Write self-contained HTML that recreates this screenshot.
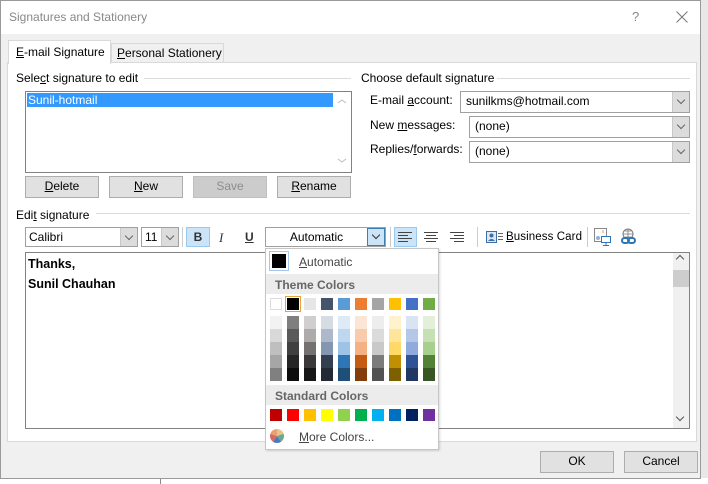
<!DOCTYPE html>
<html><head><meta charset="utf-8"><style>
*{box-sizing:border-box;margin:0;padding:0}
body{width:708px;height:484px;overflow:hidden;background:#f0f0f0;font-family:"Liberation Sans",sans-serif;font-size:12px;color:#000;position:relative}
.a{position:absolute}
.btn{position:absolute;background:#e1e1e1;border:1px solid #adadad;text-align:center;line-height:19px;font-size:12px}
.combo{position:absolute;background:#fff;border:1px solid #a0a0a0;line-height:19px;padding-left:5px}
.dd{position:absolute;right:0;top:0;bottom:0;width:17px;background:#dcdcdc;border-left:1px solid #c8c8c8}
.dd:after{content:"";position:absolute;left:5px;top:5px;width:5px;height:5px;border-right:1px solid #666;border-bottom:1px solid #666;transform:rotate(45deg)}
.line{position:absolute;height:1px;background:#dcdcdc}
.sw{position:absolute;width:12px;height:12px}
</style></head><body>
<div class="a" style="left:0;top:478px;width:708px;height:6px;background:#fff"></div>
<div class="a" style="left:160px;top:478px;width:1px;height:6px;background:#888"></div>
<div class="a" style="left:700px;top:0;width:8px;height:478px;background:#e8e8e8;border-left:1px solid #bbb"></div>
<div class="a" style="left:0;top:0;width:701px;height:479px;background:#f0f0f0;border:1px solid #9a9a9a"></div>
<div class="a" style="left:1px;top:1px;width:699px;height:33px;background:#fff"></div>
<div class="a" style="left:9px;top:10px;color:#888;font-size:12px">Signatures and Stationery</div>
<div class="a" style="left:632px;top:9px;color:#888;font-size:13px">?</div>
<svg class="a" style="left:676px;top:11px" width="12" height="12"><path d="M0.5 0.5L11.5 11.5M11.5 0.5L0.5 11.5" stroke="#777" stroke-width="1"/></svg>
<div class="a" style="left:111px;top:43px;width:113px;height:20px;background:#f0f0f0;border:1px solid #d9d9d9;border-bottom:none"></div>
<div class="a" style="left:117px;top:46px"><u>P</u>ersonal Stationery</div>
<div class="a" style="left:7px;top:62px;width:690px;height:380px;background:#fff;border:1px solid #d9d9d9"></div>
<div class="a" style="left:8px;top:40px;width:103px;height:24px;background:#fff;border:1px solid #d9d9d9;border-bottom:none"></div>
<div class="a" style="left:16px;top:45px"><u>E</u>-mail Signature</div>
<div class="a" style="left:16px;top:71px">Sele<u>c</u>t signature to edit</div>
<div class="line" style="left:144px;top:78px;width:207px"></div>
<div class="a" style="left:25px;top:91px;width:327px;height:82px;border:1px solid #828282;background:#fff"></div>
<div class="a" style="left:27px;top:93px;width:306px;height:14px;background:#3399ff;color:#fff;line-height:14px;padding-left:1px">Sunil-hotmail</div>
<svg class="a" style="left:337px;top:99px" width="10" height="70"><path d="M1 4L5 1L9 4M1 60L5 63L9 60" fill="none" stroke="#bbb"/></svg>
<div class="btn" style="left:25px;top:176px;width:74px;height:22px"><u>D</u>elete</div>
<div class="btn" style="left:109px;top:176px;width:74px;height:22px"><u>N</u>ew</div>
<div class="btn" style="left:193px;top:176px;width:74px;height:22px;background:#cccccc;border-color:#bfbfbf;color:#8d8d8d">Save</div>
<div class="btn" style="left:277px;top:176px;width:74px;height:22px"><u>R</u>ename</div>
<div class="a" style="left:361px;top:71px">Choose default signature</div>
<div class="line" style="left:497px;top:78px;width:193px"></div>
<div class="a" style="left:370px;top:93px">E-mail <u>a</u>ccount:</div>
<div class="combo" style="left:460px;top:91px;width:230px;height:22px">sunilkms@hotmail.com<div class="dd"></div></div>
<div class="a" style="left:370px;top:118px">New <u>m</u>essages:</div>
<div class="combo" style="left:469px;top:116px;width:221px;height:22px">(none)<div class="dd"></div></div>
<div class="a" style="left:370px;top:142px">Replies/<u>f</u>orwards:</div>
<div class="combo" style="left:469px;top:141px;width:221px;height:22px">(none)<div class="dd"></div></div>
<div class="a" style="left:16px;top:208px">Edi<u>t</u> signature</div>
<div class="line" style="left:96px;top:213px;width:594px"></div>
<div class="combo" style="left:25px;top:227px;width:113px;height:20px;line-height:18px;padding-left:3px">Calibri<div class="dd"></div></div>
<div class="combo" style="left:141px;top:227px;width:38px;height:20px;line-height:18px;padding-left:3px">11<div class="dd"></div></div>
<div class="a" style="left:182px;top:227px;width:1px;height:20px;background:#ccc"></div>
<div class="a" style="left:186px;top:227px;width:24px;height:20px;background:#cce4f7;border:1px solid #99c9ef;text-align:center;line-height:18px;font-weight:bold;color:#333">B</div>
<div class="a" style="left:219px;top:230px;font-style:italic;font-family:'Liberation Serif',serif;font-size:13px;color:#333">I</div>
<div class="a" style="left:245px;top:230px;text-decoration:underline;color:#333;font-weight:bold">U</div>
<div class="a" style="left:265px;top:227px;width:121px;height:20px;background:#fff;border:1px solid #a0a0a0;text-align:center;line-height:18px;padding-right:18px">Automatic<div class="a" style="right:0;top:0;width:18px;height:18px;background:#cce4f7;border:1px solid #3c7fb1"></div><div class="a" style="right:6px;top:4px;width:6px;height:6px;border-right:1px solid #333;border-bottom:1px solid #333;transform:rotate(45deg)"></div></div>
<div class="a" style="left:390px;top:227px;width:1px;height:20px;background:#ccc"></div>
<div class="a" style="left:394px;top:227px;width:23px;height:20px;background:#cce4f7;border:1px solid #99c9ef"></div>
<svg class="a" style="left:397px;top:231px" width="72" height="12"><g stroke="#444" stroke-width="1"><path d="M1 1.5h14M1 4.5h10M1 7.5h14M1 10.5h10"/><path d="M27 1.5h14M29 4.5h10M27 7.5h14M29 10.5h10"/><path d="M53 1.5h14M57 4.5h10M53 7.5h14M57 10.5h10"/></g></svg>
<div class="a" style="left:477px;top:227px;width:1px;height:20px;background:#ccc"></div>
<svg class="a" style="left:486px;top:231px" width="18" height="13"><rect x="0.5" y="0.5" width="10" height="11" fill="#dbe8f5" stroke="#3c6ea8"/><circle cx="5.5" cy="4.5" r="2" fill="#3c6ea8"/><path d="M2 10 q3.5-4 7 0" fill="#3c6ea8"/><path d="M12 2.5h5M12 5.5h5M12 8.5h5" stroke="#666"/></svg>
<div class="a" style="left:506px;top:231px;font-size:11.5px;letter-spacing:0.1px"><u>B</u>usiness Card</div>
<div class="a" style="left:587px;top:227px;width:1px;height:20px;background:#ccc"></div>
<svg class="a" style="left:594px;top:228px" width="18" height="18"><rect x="0.5" y="0.5" width="12" height="13" fill="#fff" stroke="#888"/><circle cx="4" cy="10" r="2" fill="#8fb1d9"/><rect x="7.5" y="8.5" width="9" height="6" fill="#fff" stroke="#2e75b5"/><path d="M12 15v2M9 17.5h6" stroke="#2e75b5"/><path d="M9 2v3" stroke="#e8a060"/></svg>
<svg class="a" style="left:621px;top:228px" width="16" height="18"><circle cx="7" cy="6" r="5" fill="none" stroke="#777"/><path d="M2 6h10M7 1v10M4 3h6M4 9h6" stroke="#777" stroke-width=".8"/><rect x="1" y="10" width="7" height="5" rx="2.5" fill="none" stroke="#2e75b5" stroke-width="2"/><rect x="7" y="10" width="7" height="5" rx="2.5" fill="none" stroke="#2e75b5" stroke-width="2"/></svg>
<div class="a" style="left:25px;top:252px;width:665px;height:177px;background:#fff;border:1px solid #828282"></div>
<div class="a" style="left:28px;top:254px;font-weight:bold;font-size:12.5px;line-height:20px">Thanks,<br>Sunil Chauhan</div>
<div class="a" style="left:673px;top:253px;width:16px;height:175px;background:#f0f0f0"></div>
<div class="a" style="left:673px;top:270px;width:16px;height:17px;background:#cdcdcd"></div>
<div class="a" style="left:677px;top:256px;width:6px;height:6px;border-left:1.5px solid #555;border-top:1.5px solid #555;transform:rotate(45deg)"></div>
<div class="a" style="left:677px;top:414px;width:6px;height:6px;border-right:1.5px solid #555;border-bottom:1.5px solid #555;transform:rotate(45deg)"></div>
<div class="btn" style="left:540px;top:451px;width:74px;height:22px">OK</div>
<div class="btn" style="left:624px;top:451px;width:74px;height:22px">Cancel</div>
<div class="a" style="left:265px;top:248px;width:174px;height:202px;background:#fff;border:1px solid #c6c6c6;box-shadow:1px 1px 2px rgba(0,0,0,.15)"></div>
<div class="a" style="left:269px;top:251px;width:20px;height:20px;border:1px solid #a5c8e8"></div>
<div class="a" style="left:272px;top:254px;width:14px;height:14px;background:#000"></div>
<div class="a" style="left:299px;top:255px;color:#444"><u>A</u>utomatic</div>
<div class="a" style="left:266px;top:274px;width:172px;height:20px;background:#ececec"></div>
<div class="a" style="left:275px;top:278px;font-weight:bold;color:#666">Theme Colors</div>
<div class="a" style="left:266px;top:385px;width:172px;height:20px;background:#ececec"></div>
<div class="a" style="left:275px;top:389px;font-weight:bold;color:#666">Standard Colors</div>
<div id="pal"></div>
<svg class="a" style="left:268px;top:427px" width="18" height="18"><g transform="translate(9 9)"><path d="M0 0L0-7A7 7 0 0 1 6.7-2.2Z" fill="#e8c48a"/><path d="M0 0L6.7-2.2A7 7 0 0 1 4.1 5.7Z" fill="#6aa88e"/><path d="M0 0L4.1 5.7A7 7 0 0 1-4.1 5.7Z" fill="#4a78c4"/><path d="M0 0L-4.1 5.7A7 7 0 0 1-6.7-2.2Z" fill="#d76a5a"/><path d="M0 0L-6.7-2.2A7 7 0 0 1 0-7Z" fill="#e8a070"/></g></svg>
<div class="a" style="left:299px;top:430px;color:#444"><u>M</u>ore Colors...</div>
<script>
var th=["#ffffff","#000000","#e7e6e6","#44546a","#5b9bd5","#ed7d31","#a5a5a5","#ffc000","#4472c4","#70ad47"];
var sh=[["#f2f2f2","#d9d9d9","#bfbfbf","#a6a6a6","#808080"],["#7f7f7f","#595959","#404040","#262626","#0d0d0d"],["#d0cece","#aeaaaa","#757171","#3a3838","#171616"],["#d6dce4","#adb9ca","#8496b0","#333f4f","#222a35"],["#deebf6","#bdd7ee","#9dc3e6","#2e75b5","#1f4e79"],["#fbe5d5","#f7cbac","#f4b183","#c55a11","#833c0b"],["#ededed","#dbdbdb","#c9c9c9","#7b7b7b","#525252"],["#fff2cc","#fee599","#ffd965","#bf9000","#7f6000"],["#dae3f3","#b4c7e7","#8faadc","#2f5496","#1f3864"],["#e2efd9","#c5e0b3","#a8d08d","#538135","#375623"]];
var st=["#c00000","#ff0000","#ffc000","#ffff00","#92d050","#00b050","#00b0f0","#0070c0","#002060","#7030a0"];
var h="";
for(var i=0;i<10;i++){var x=270+i*17;
h+='<div class="sw" style="left:'+x+'px;top:298px;background:'+th[i]+';'+(i==0?'border:1px solid #ddd;':'')+(i==1?'outline:1px solid #e8a33c;outline-offset:1px;':'')+'"></div>';
for(var j=0;j<5;j++)h+='<div class="sw" style="left:'+x+'px;top:'+(316+j*13)+'px;height:13px;background:'+sh[i][j]+'"></div>';
h+='<div class="sw" style="left:'+x+'px;top:409px;background:'+st[i]+'"></div>';}
document.getElementById("pal").innerHTML=h;
</script>
</body></html>
